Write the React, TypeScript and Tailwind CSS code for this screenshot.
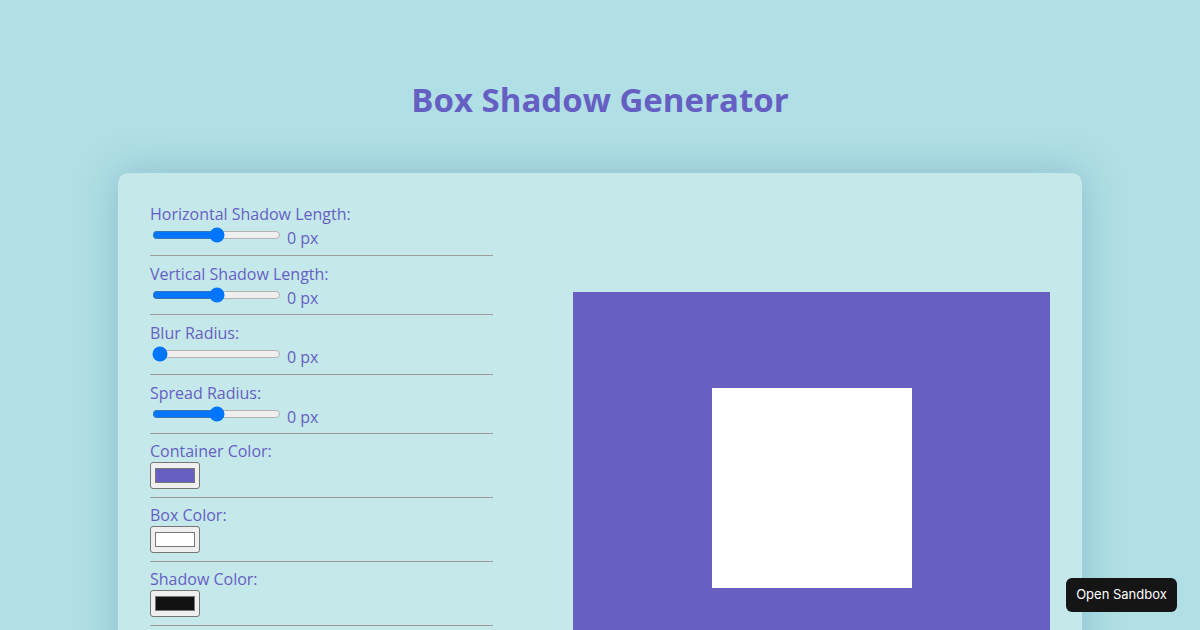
import { useState } from "react";

const ink = "text-[#665fc3]";

const SliderRow = ({ label, min, max, init }: { label: string; min: number; max: number; init: number }) => {
  const [v, setV] = useState(init);
  return (
    <div>
      <div className="h-[24px] leading-[24px]">{label}</div>
      <div className="flex h-[23.5px] items-start">
        <input
          type="range"
          min={min}
          max={max}
          value={v}
          onChange={(e) => setV(Number(e.target.value))}
          className="m-0 ml-[2px] mt-[1px] w-[129px]"
        />
        <span className="ml-[6px] leading-[24px]">0 px</span>
      </div>
      <hr className="mb-[6px] mt-[5px] border-t border-[#9c9c9c]" />
    </div>
  );
};

const ColorRow = ({ label, init }: { label: string; init: string }) => {
  const [c, setC] = useState(init);
  return (
    <div>
      <div className="h-[22px] leading-[22px]">{label}</div>
      <input
        type="color"
        value={c}
        onChange={(e) => setC(e.target.value)}
        className="block h-[27px] w-[50px] rounded-[3px] border border-[#767676] bg-[#efefef] px-[2px] py-[1px]"
      />
      <hr className="mb-[6px] mt-[8px] border-t border-[#9c9c9c]" />
    </div>
  );
};

export default function App() {
  return (
    <div className="min-h-screen bg-[#b0dfe5] pt-[78px] font-['Open_Sans',sans-serif]">
      <h1 className={`text-center text-[33px] font-bold leading-[44px] ${ink}`}>Box Shadow Generator</h1>

      <div className="mx-auto mt-[51px] flex w-[964px] items-start gap-[80px] rounded-[10px] bg-[#c5e8eb] px-[32px] pb-[40px] pt-[29px] shadow-[0_0_40px_rgba(80,140,170,0.4)]">
        <div className={`w-[343px] text-[16px] ${ink}`}>
          <SliderRow label="Horizontal Shadow Length:" min={-50} max={50} init={0} />
          <SliderRow label="Vertical Shadow Length:" min={-50} max={50} init={0} />
          <SliderRow label="Blur Radius:" min={0} max={100} init={0} />
          <SliderRow label="Spread Radius:" min={-50} max={50} init={0} />
          <ColorRow label="Container Color:" init="#675fc2" />
          <ColorRow label="Box Color:" init="#ffffff" />
          <ColorRow label="Shadow Color:" init="#121212" />
        </div>

        <div className="mt-[90px] flex h-[392px] w-[477px] items-center justify-center bg-[#675fc2]">
          <div className="h-[200px] w-[200px] bg-white" />
        </div>
      </div>

      <button className="fixed bottom-[18px] right-[23px] h-[34px] w-[111px] rounded-[6px] bg-[#151515] font-['Inter',sans-serif] text-[13px] text-white">
        Open Sandbox
      </button>
    </div>
  );
}
